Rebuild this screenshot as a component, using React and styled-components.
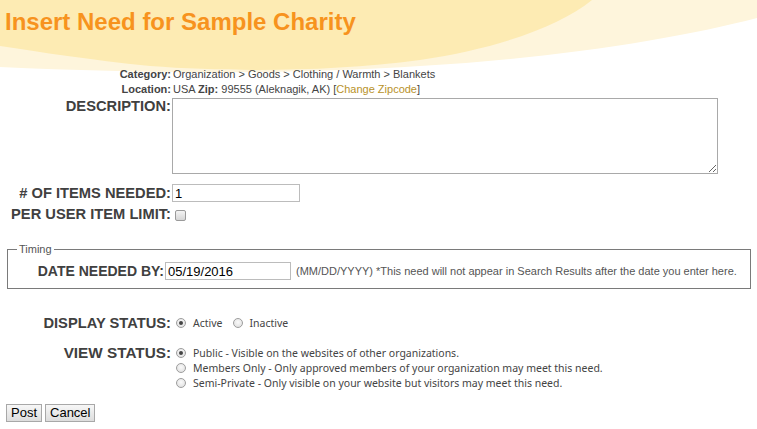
import React from "react";
import styled, { createGlobalStyle } from "styled-components";

const GlobalStyle = createGlobalStyle`
  html, body {
    margin: 0;
    padding: 0;
    background: #fff;
  }
  body {
    font-family: "Liberation Sans", Arial, sans-serif;
    color: #444;
  }
`;

const Page = styled.div`
  position: relative;
  width: 757px;
  min-height: 429px;
  overflow: hidden;
`;

const Swoosh = styled.svg`
  position: absolute;
  top: 0;
  left: 0;
  z-index: 0;
`;

const Content = styled.div`
  position: relative;
  z-index: 1;
  padding-top: 8px;
`;

const Title = styled.h1`
  margin: 0 0 31px 5px;
  font-family: "Liberation Sans", Arial, sans-serif;
  font-size: 24px;
  line-height: 28px;
  font-weight: bold;
  color: #f7931e;
`;

const Row = styled.div`
  display: grid;
  grid-template-columns: ${p => p.$label || "164px"} 1fr;
  column-gap: 1px;
  align-items: ${p => p.$align || "center"};
  margin-top: ${p => p.$mt || "0px"};
  margin-left: ${p => p.$ml || "7px"};
`;

const InfoLabel = styled.div`
  text-align: right;
  font-family: "Liberation Sans", Tahoma, sans-serif;
  font-size: 11px;
  line-height: 15px;
  font-weight: bold;
  color: #444;
`;

const InfoValue = styled.div`
  font-family: "Liberation Sans", Tahoma, sans-serif;
  font-size: 11px;
  line-height: 15px;
  color: #444;
  padding-left: 1px;

  b {
    font-weight: bold;
  }
`;

const ZipLink = styled.a`
  color: #b8922a;
  text-decoration: none;
  cursor: pointer;
`;

const Label = styled.div`
  text-align: right;
  font-family: "Liberation Sans", Arial, sans-serif;
  font-size: ${p => p.$size || "14.7px"};
  line-height: 16px;
  font-weight: bold;
  color: #404040;
  white-space: nowrap;
`;

const TextArea = styled.textarea`
  box-sizing: border-box;
  width: 546px;
  height: 76px;
  border: 1px solid #a9a9a9;
  margin: 0;
  padding: 2px;
  font-family: "Liberation Sans", Arial, sans-serif;
  font-size: 13px;
  display: block;
`;

const TextInput = styled.input`
  box-sizing: border-box;
  width: ${p => p.$w || "128px"};
  height: 18px;
  border: 1px solid #bcbcbc;
  margin: 0;
  padding: 0 2px;
  font-family: "Liberation Sans", Arial, sans-serif;
  font-size: 13px;
  color: #000;
  outline: none;
`;

const Checkbox = styled.input.attrs({ type: "checkbox" })`
  appearance: none;
  box-sizing: border-box;
  width: 11px;
  height: 11px;
  margin: 2px 0 0 3px;
  border: 1px solid #9a9a9a;
  border-radius: 2px;
  background: linear-gradient(#f4f4f4, #d6d6d6);
  display: block;
`;

const Fieldset = styled.fieldset`
  margin: 21px 6px 0 7px;
  padding: 6px 0 8px 0;
  border: 1px solid #7a7a7a;
  min-width: 0;
`;

const Legend = styled.legend`
  margin-left: 9px;
  padding: 0 2px;
  font-family: "Liberation Sans", Tahoma, sans-serif;
  font-size: 11px;
  line-height: 13px;
  color: #555;
`;

const DateLine = styled.div`
  display: flex;
  align-items: center;
  gap: 5px;
`;

const Hint = styled.span`
  font-family: "Liberation Sans", Tahoma, sans-serif;
  font-size: 11px;
  color: #555;
  white-space: nowrap;
`;

const RadioGroup = styled.div`
  display: flex;
  flex-direction: ${p => (p.$column ? "column" : "row")};
  align-items: ${p => (p.$column ? "flex-start" : "center")};
`;

const RadioLine = styled.label`
  display: flex;
  align-items: center;
  height: 15px;
  font-family: "Noto Sans", "Liberation Sans", sans-serif;
  font-size: 10.5px;
  color: #444;
  margin-right: 6px;
  white-space: nowrap;
`;

const Radio = styled.input.attrs({ type: "radio" })`
  appearance: none;
  box-sizing: border-box;
  width: 10px;
  height: 10px;
  margin: 0 7px 0 4px;
  border: 1px solid #9d9d9d;
  border-radius: 50%;
  background: radial-gradient(circle at 50% 40%, #fafafa, #dcdcdc);
  position: relative;

  &:checked::after {
    content: "";
    position: absolute;
    left: 2px;
    top: 2px;
    width: 4px;
    height: 4px;
    border-radius: 50%;
    background: #444;
  }
`;

const Buttons = styled.div`
  display: flex;
  gap: 3px;
  margin: 14px 0 0 6px;
`;

const Button = styled.button`
  box-sizing: border-box;
  height: 18px;
  padding: 0 4px;
  border: 1px solid #a8a8a8;
  background: linear-gradient(#f7f7f7, #dddddd);
  font-family: "Liberation Sans", Arial, sans-serif;
  font-size: 13px;
  line-height: 16px;
  color: #000;
  cursor: pointer;
`;

const viewOptions = [
  { id: "public", text: "Public - Visible on the websites of other organizations.", checked: true },
  { id: "members", text: "Members Only - Only approved members of your organization may meet this need." },
  { id: "semi", text: "Semi-Private - Only visible on your website but visitors may meet this need." }
];

const App = () => {
  return (
    <Page>
      <GlobalStyle />
      <Swoosh width="757" height="110" viewBox="0 0 757 110">
        <path
          d="M0,0 H757 V18 C680,38 560,58 420,66 C300,74 150,74 0,67 Z"
          fill="#fef5dc"
        />
        <path
          d="M0,0 H592 C560,26 500,48 420,60 C330,72 230,72 150,66 C90,60 40,52 0,46 Z"
          fill="#fdebb3"
        />
      </Swoosh>
      <Content>
        <Title>Insert Need for Sample Charity</Title>

        <Row>
          <InfoLabel>Category:</InfoLabel>
          <InfoValue>Organization &gt; Goods &gt; Clothing / Warmth &gt; Blankets</InfoValue>
        </Row>
        <Row>
          <InfoLabel>Location:</InfoLabel>
          <InfoValue>
            USA <b>Zip:</b> 99555 (Aleknagik, AK) [<ZipLink>Change Zipcode</ZipLink>]
          </InfoValue>
        </Row>

        <Row $align="start" $mt="1px">
          <Label>DESCRIPTION:</Label>
          <TextArea />
        </Row>

        <Row $mt="10px">
          <Label># OF ITEMS NEEDED:</Label>
          <TextInput defaultValue="1" />
        </Row>

        <Row $mt="4px">
          <Label>PER USER ITEM LIMIT:</Label>
          <div>
            <Checkbox />
          </div>
        </Row>

        <Fieldset>
          <Legend>Timing</Legend>
          <Row $label="156px" $ml="0px">
            <Label $size="14px">DATE NEEDED BY:</Label>
            <DateLine>
              <TextInput $w="126px" defaultValue="05/19/2016" />
              <Hint>
                (MM/DD/YYYY) *This need will not appear in Search Results after the date you enter here.
              </Hint>
            </DateLine>
          </Row>
        </Fieldset>

        <Row $mt="26px">
          <Label>DISPLAY STATUS:</Label>
          <RadioGroup>
            <RadioLine>
              <Radio name="display" defaultChecked />
              Active
            </RadioLine>
            <RadioLine>
              <Radio name="display" />
              Inactive
            </RadioLine>
          </RadioGroup>
        </Row>

        <Row $align="start" $mt="14px">
          <Label $size="15.3px">VIEW STATUS:</Label>
          <RadioGroup $column>
            {viewOptions.map(opt => (
              <RadioLine key={opt.id}>
                <Radio name="view" defaultChecked={opt.checked} />
                {opt.text}
              </RadioLine>
            ))}
          </RadioGroup>
        </Row>

        <Buttons>
          <Button>Post</Button>
          <Button>Cancel</Button>
        </Buttons>
      </Content>
    </Page>
  );
};

export default App;
